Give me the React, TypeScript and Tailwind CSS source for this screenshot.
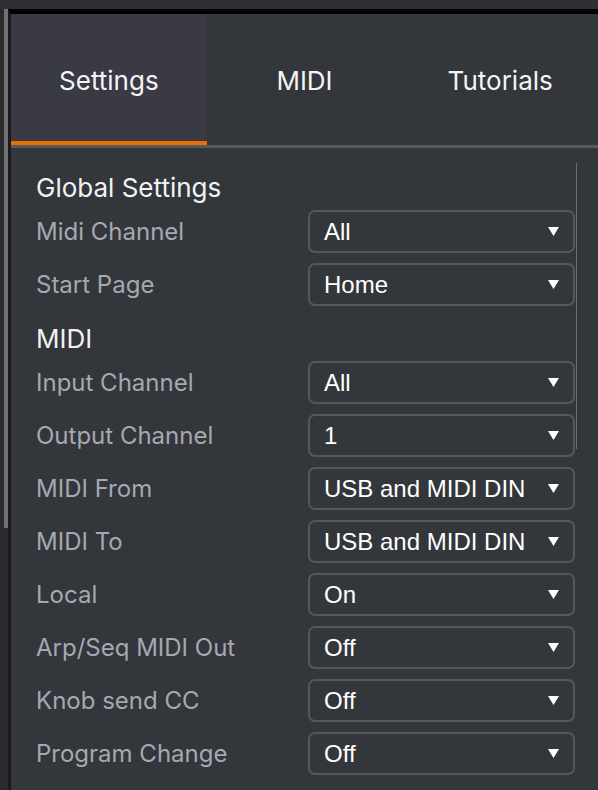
import React from "react";

type Row =
  | { kind: "heading"; text: string }
  | { kind: "select"; label: string; value: string };

const rows: Row[] = [
  { kind: "heading", text: "Global Settings" },
  { kind: "select", label: "Midi Channel", value: "All" },
  { kind: "select", label: "Start Page", value: "Home" },
  { kind: "heading", text: "MIDI" },
  { kind: "select", label: "Input Channel", value: "All" },
  { kind: "select", label: "Output Channel", value: "1" },
  { kind: "select", label: "MIDI From", value: "USB and MIDI DIN" },
  { kind: "select", label: "MIDI To", value: "USB and MIDI DIN" },
  { kind: "select", label: "Local", value: "On" },
  { kind: "select", label: "Arp/Seq MIDI Out", value: "Off" },
  { kind: "select", label: "Knob send CC", value: "Off" },
  { kind: "select", label: "Program Change", value: "Off" },
];

const tabs = ["Settings", "MIDI", "Tutorials"];

function Caret() {
  return (
    <svg width="11" height="9" viewBox="0 0 11 9" className="shrink-0">
      <polygon points="0,0 11,0 5.5,9" fill="#ffffff" />
    </svg>
  );
}

function Dropdown({ value }: { value: string }) {
  return (
    <div className="flex h-[43px] w-[267px] items-center justify-between rounded-[7px] border-2 border-[#55575b] bg-[#33363a] pl-[14px] pr-[14px]">
      <span
        className="text-[24px] leading-none text-white"
        style={{ fontFamily: '"Liberation Sans", Arial, sans-serif' }}
      >
        {value}
      </span>
      <Caret />
    </div>
  );
}

export default function App() {
  const inter = { fontFamily: 'Inter, "Noto Sans", sans-serif' };
  return (
    <div className="flex h-[790px] w-[598px] flex-col overflow-hidden bg-[#2c2e31]" style={inter}>
      <div className="h-[9px] shrink-0 bg-[#2e3034]" />
      <div className="flex min-h-0 flex-1">
        {/* outer scroll gutter */}
        <div className="w-[4px] bg-[#2a2b2d]" />
        <div className="flex w-[4px] flex-col bg-[#2a2b2d]">
          <div className="h-[519px] bg-[#727272]" />
        </div>
        {/* settings panel */}
        <div className="flex min-w-0 flex-1 flex-col border-l-[3px] border-t-[5px] border-l-[#1b1b1c] border-t-black bg-[#33363a]">
          <div className="flex h-[127px] shrink-0">
            {tabs.map((t, i) => (
              <div
                key={t}
                className={
                  i === 0
                    ? "flex flex-1 items-center justify-center bg-[#393a43] pt-[5px] text-[26px] text-[#f4f4f6]"
                    : "flex flex-1 items-center justify-center pt-[5px] text-[26px] text-[#f4f4f6]"
                }
              >
                {t}
              </div>
            ))}
          </div>
          <div className="flex h-[4px] shrink-0">
            <div className="w-1/3 bg-[#ec6f05]" />
          </div>
          <div className="h-[3px] shrink-0 bg-[#58595c]" />

          <div className="flex min-h-0 flex-1">
            <div className="flex flex-1 flex-col pl-[25px] pt-[17px]">
              {rows.map((r, i) =>
                r.kind === "heading" ? (
                  <div
                    key={i}
                    className="flex h-[45px] items-center text-[26px] text-[#f2f2f4]"
                  >
                    {r.text}
                  </div>
                ) : (
                  <div key={i} className="mb-[10px] flex h-[43px] items-center justify-between">
                    <span className="text-[24px] text-[#a6a8b2]">{r.label}</span>
                    <Dropdown value={r.value} />
                  </div>
                )
              )}
            </div>
            {/* inner scroll thumb */}
            <div className="ml-[1px] w-[1px] pt-[15px]">
              <div className="h-[286px] bg-[#6c6d70]" />
            </div>
            <div className="w-[21px]" />
          </div>
        </div>
      </div>
    </div>
  );
}
